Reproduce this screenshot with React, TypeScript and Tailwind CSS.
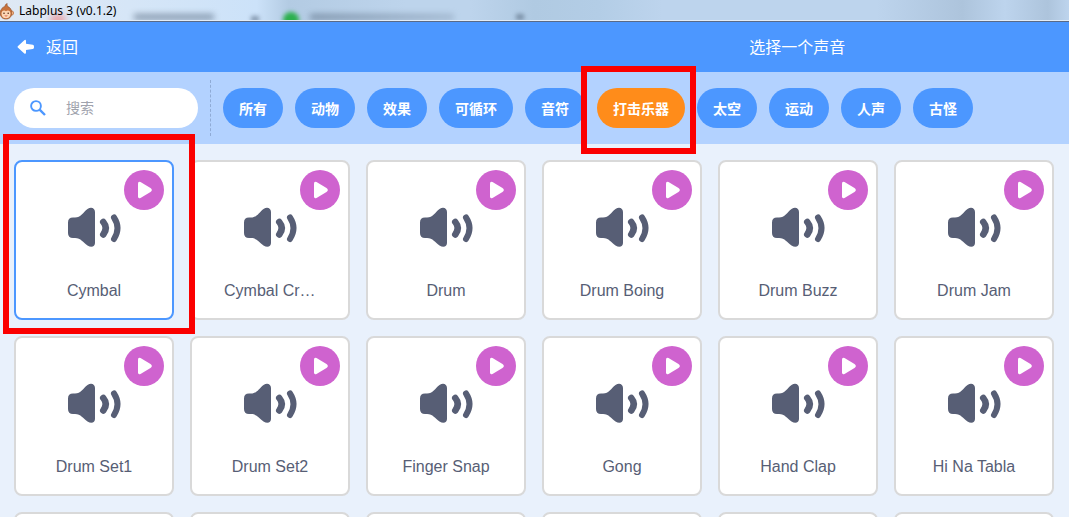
import { useState } from 'react'
import clsx from 'clsx'

const tags = ['所有', '动物', '效果', '可循环', '音符', '打击乐器', '太空', '运动', '人声', '古怪']

const sounds = [
  'Cymbal',
  'Cymbal Crash',
  'Drum',
  'Drum Boing',
  'Drum Buzz',
  'Drum Jam',
  'Drum Set1',
  'Drum Set2',
  'Finger Snap',
  'Gong',
  'Hand Clap',
  'Hi Na Tabla',
]

function MonkeyLogo() {
  return (
    <svg viewBox="0 0 16 18" className="-ml-0.5 h-[18px] w-4 shrink-0" aria-hidden="true">
      <circle cx="2.8" cy="11" r="2.2" fill="#f3b98c" stroke="#b5622f" strokeWidth="0.7" />
      <circle cx="13.4" cy="11" r="2.2" fill="#f3b98c" stroke="#b5622f" strokeWidth="0.7" />
      <path
        d="M8 17 C4 17 2.300 14.500 2.500 10.500 C2.700 7 4.500 5 7 4.500 C7 3 7.800 2 9.200 1.600 C8.900 2.600 9.200 3.600 9.800 4.600 C12.300 5.500 13.600 7.500 13.600 10.500 C13.700 14.500 12 17 8 17 Z"
        fill="#c9733c"
        stroke="#8a4a28"
        strokeWidth="0.6"
      />
      <path
        d="M8 9.200 C10 7.600 12.600 8.800 12.500 11.800 C12.400 14.800 10.500 16.300 8 16.300 C5.500 16.300 3.600 14.800 3.500 11.800 C3.500 8.800 6 7.600 8 9.200 Z"
        fill="#fcd6b4"
      />
      <circle cx="6" cy="11.2" r="0.8" fill="#5a2f1a" />
      <circle cx="10.2" cy="11.2" r="0.8" fill="#5a2f1a" />
      <path d="M6.300 13.500 Q8 15.400 9.900 13.500 Z" fill="#d9553f" />
    </svg>
  )
}

function BackArrow() {
  return (
    <svg viewBox="0 0 18 16" className="h-4 w-[18px]" aria-hidden="true">
      <path
        d="M1.800 7.200 L8.300 1.200 Q9.800 .2 10 2 V4.700 L16.800 5.800 Q18 6.200 18 7.400 V8.600 Q18 9.700 16.800 10 L10 11 V13.600 Q9.800 15.500 8.300 14.500 L1.800 8.600 Q1.200 7.900 1.800 7.200 Z"
        fill="#fff"
      />
    </svg>
  )
}

function SearchIcon() {
  return (
    <svg viewBox="0 0 16 16" className="h-4 w-4" fill="none" stroke="#4c97ff" aria-hidden="true">
      <circle cx="6" cy="6" r="4.9" strokeWidth="1.9" />
      <path d="M9.600 9.600 L15 15" strokeWidth="2.4" />
    </svg>
  )
}

function SpeakerIcon() {
  return (
    <svg viewBox="0 0 54 40" className="h-10 w-[54px]" aria-hidden="true">
      <path
        d="M1 15.500 Q1 10.500 6 10.500 H8 C14 10.500 16 5.500 20.500 2 C24.500-.8 28 1.500 28 5 V36 C28 39.500 24.500 41 20.500 38.500 C16 35.500 14 31 8 31 H6 Q1 31 1 26 Z"
        fill="#575e75"
      />
      <path d="M36.300 15 Q41.300 21 36.300 27.500" fill="none" stroke="#575e75" strokeWidth="6.6" strokeLinecap="round" />
      <path d="M47 10.500 Q54 21 47 32" fill="none" stroke="#575e75" strokeWidth="6" strokeLinecap="round" />
    </svg>
  )
}

function PlayIcon() {
  return (
    <svg viewBox="0 0 40 40" className="h-10 w-10" aria-hidden="true">
      <path
        d="M16.500 12 L26.500 18 Q29.200 20 26.500 22 L16.500 28 Q14 29 14 26.500 V13.500 Q14 11 16.500 12 Z"
        fill="#fff"
      />
    </svg>
  )
}

type CardProps = {
  name: string
  selected: boolean
  onSelect: () => void
}

function SoundCard({ name, selected, onSelect }: CardProps) {
  return (
    <li className="relative">
      <button
        type="button"
        onClick={onSelect}
        className={clsx(
          'flex h-40 w-full flex-col items-center rounded-lg border-2 bg-white px-8 pt-[45px] text-[#575e75]',
          selected ? 'border-[#4c97ff]' : 'border-[#d9d9d9]'
        )}
      >
        <SpeakerIcon />
        <span className="mt-8 w-full truncate text-center text-base leading-6">{name}</span>
      </button>
      <button
        type="button"
        aria-label="播放"
        className="absolute top-2.5 right-2.5 h-10 w-10 rounded-full bg-[#cf63cf]"
      >
        <PlayIcon />
      </button>
      {selected && (
        <span className="pointer-events-none absolute -top-[26px] -right-[21px] -bottom-3.5 -left-[11px] z-10 border-6 border-[#fb0000]" />
      )}
    </li>
  )
}

export default function App() {
  const [tag, setTag] = useState('打击乐器')
  const [selected, setSelected] = useState('Cymbal')

  return (
    <div className="flex h-screen flex-col overflow-hidden bg-[#e9f1fc] font-['Liberation_Sans','Noto_Sans_CJK_SC',sans-serif]">
      <div className="relative flex h-[22px] shrink-0 items-center overflow-hidden border-b border-[#5a6a86] bg-[#bdd4ed]">
        <div className="absolute inset-0 bg-[linear-gradient(90deg,#dfe9f4_0%,#d6e6f7_12%,#cce2f9_24%,#b3cbe3_27%,#bdd4ec_38%,#bdd4ec_44%,#b0cae2_50%,#b3cde6_56%,#bdd4ed_62%,#bdd4ed_82%,#adc4dc_90%,#bdd4ed_94%,#adc4dc_98%,#bdd4ed_100%)]" />
        <div className="absolute top-3.5 left-[50px] h-3 w-4 rounded-full bg-[#ef8f8f] opacity-70 blur-[3px]" />
        <div className="absolute top-3.5 left-[134px] h-1.5 w-20 bg-[#56697f] opacity-60 blur-[3px]" />
        <div className="absolute top-4 left-[251px] h-1.5 w-2 bg-[#56697f] opacity-60 blur-[2px]" />
        <div className="absolute top-3 left-[283px] h-4 w-4 rounded-full bg-[#2bb04c] blur-[2px]" />
        <div className="absolute top-3.5 left-[310px] h-1.5 w-36 bg-linear-to-r from-[#56697f] to-[#8fa4bb] opacity-60 blur-[3px]" />
        <div className="absolute top-3.5 left-[516px] h-1.5 w-2 bg-[#56697f] opacity-60 blur-[2px]" />
        <div className="absolute inset-x-0 bottom-0 h-px bg-[#e3ecf6]" />
        <div className="relative flex items-center gap-[5px]">
          <MonkeyLogo />
          <span className="font-['Noto_Sans'] text-xs text-black">Labplus 3 (v0.1.2)</span>
        </div>
      </div>

      <header className="grid h-[50px] shrink-0 grid-cols-2 items-center bg-[#4c97ff] pr-1.5 text-white">
        <button type="button" className="flex items-center gap-3 justify-self-start pl-4 text-base">
          <BackArrow />
          <span className="pt-0.5">返回</span>
        </button>
        <h1 className="pt-0.5 text-center text-base">选择一个声音</h1>
      </header>

      <div className="flex h-[72px] shrink-0 items-center bg-[#b3d2ff] pl-3.5">
        <label className="flex h-10 w-46 shrink-0 items-center gap-5 rounded-full bg-white pl-4">
          <SearchIcon />
          <input
            type="text"
            placeholder="搜索"
            aria-label="搜索"
            className="w-28 text-sm text-[#575e75] outline-none placeholder:text-[#a0a3ad]"
          />
        </label>
        <div className="mx-3 h-14 border-l border-dashed border-[#8fabd6]" />
        <div className="flex gap-3">
          {tags.map((t) => (
            <div key={t} className="relative shrink-0">
              <button
                type="button"
                onClick={() => setTag(t)}
                className={clsx(
                  'h-10 rounded-full px-4 pt-0.5 text-sm font-bold text-white',
                  t === tag ? 'bg-[#ff8c1a]' : 'bg-[#4c97ff]'
                )}
              >
                {t}
              </button>
              {t === tag && (
                <span className="pointer-events-none absolute -top-[22px] -right-[11px] -bottom-[26px] -left-4 z-10 border-6 border-[#fb0000]" />
              )}
            </div>
          ))}
        </div>
      </div>

      <main className="min-h-0 flex-1 pt-4 pl-3.5">
        <ul className="grid grid-cols-[repeat(auto-fill,160px)] gap-4">
          {sounds.map((name) => (
            <SoundCard
              key={name}
              name={name}
              selected={name === selected}
              onSelect={() => setSelected(name)}
            />
          ))}
          {[0, 1, 2, 3, 4, 5].map((n) => (
            <li key={n} className="h-40 rounded-lg border-2 border-[#d9d9d9] bg-white" />
          ))}
        </ul>
      </main>
    </div>
  )
}
